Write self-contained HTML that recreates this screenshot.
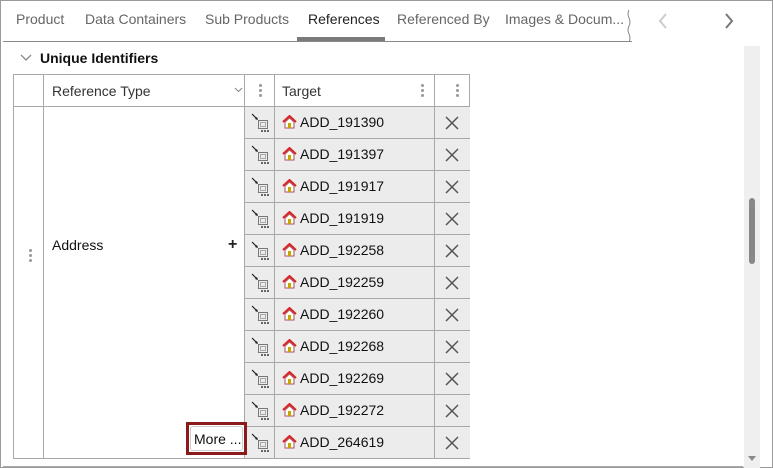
<!DOCTYPE html>
<html><head><meta charset="utf-8"><style>
*{margin:0;padding:0;box-sizing:border-box}
body{width:773px;height:468px;overflow:hidden;background:#fff;font-family:"Liberation Sans",Tahoma,sans-serif;font-size:14px;color:#222;position:relative}
.a{position:absolute}
.tab{position:absolute;top:11px;font-size:14px;color:#666}
.cell{position:absolute;border-left:1px solid #a8a8a8;border-top:1px solid #a8a8a8}
.g{background:#ececec}
.t{position:absolute;left:25px;top:7px;font-size:14px;color:#111}
.house{position:absolute;left:7px;top:8px}
.x{position:absolute;left:10px;top:9px}
.ic{position:absolute;left:6px;top:6px}
.dots{position:absolute;width:3px}
.dots i{display:block;width:3px;height:3px;border-radius:50%;background:#999;margin-bottom:2px}
</style></head><body>
<div class="a" style="left:0;top:0;width:773px;height:468px;border:1px solid #9a9a9a"></div>
<div class="tab" style="left:16px">Product</div>
<div class="tab" style="left:85px">Data Containers</div>
<div class="tab" style="left:205px">Sub Products</div>
<div class="tab" style="left:308px;color:#222">References</div>
<div class="tab" style="left:397px">Referenced By</div>
<div class="tab" style="left:505px">Images &amp; Docum...</div>
<svg class="a" style="left:626px;top:10px" width="6" height="32"><path d="M3 0 Q1 4 3 8 Q5 12 3 16 Q1 20 3 24 Q5 28 3 32" fill="none" stroke="#888" stroke-width="1"/></svg>
<div class="a" style="left:3px;top:41px;width:629px;height:1px;background:#8a8a8a"></div>
<div class="a" style="left:297px;top:37px;width:88px;height:4px;background:#7a7a7a"></div>
<svg class="a" style="left:656px;top:12px" width="14" height="18"><path d="M10 2 L4 9 L10 16" fill="none" stroke="#ccc" stroke-width="2"/></svg>
<svg class="a" style="left:722px;top:12px" width="14" height="18"><path d="M4 2 L10 9 L4 16" fill="none" stroke="#777" stroke-width="2"/></svg>
<div class="a" style="left:744px;top:46px;width:16px;height:422px;background:#efefef"></div>
<div class="a" style="left:749px;top:198px;width:6px;height:66px;background:#888;border-radius:3px"></div>
<svg class="a" style="left:746px;top:455px" width="12" height="8"><path d="M2 1 L10 1 L6 6Z" fill="#888"/></svg>
<svg class="a" style="left:20px;top:54px" width="12" height="8"><path d="M1 1 L6 6 L11 1" fill="none" stroke="#888" stroke-width="1.3"/></svg>
<div class="a" style="left:40px;top:50px;font-weight:bold;font-size:14px;color:#111">Unique Identifiers</div>
<div class="a" style="left:13px;top:74px;width:457px;height:385px;border-right:1px solid #a8a8a8;border-bottom:1px solid #a8a8a8"></div>
<div class="cell" style="left:13px;top:74px;width:30px;height:32px"></div>
<div class="cell" style="left:43px;top:74px;width:201px;height:32px"><span class="a" style="left:8px;top:8px;color:#333">Reference Type</span><svg class="a" style="left:190px;top:12px" width="9" height="6"><path d="M1 1 L4.5 4.5 L8 1" fill="none" stroke="#888"/></svg></div>
<div class="cell" style="left:244px;top:74px;width:30px;height:32px"><div class="dots" style="left:14px;top:9px"><i></i><i></i><i></i></div></div>
<div class="cell" style="left:274px;top:74px;width:160px;height:32px"><span class="a" style="left:7px;top:8px;color:#333">Target</span><div class="dots" style="left:146px;top:9px"><i></i><i></i><i></i></div></div>
<div class="cell" style="left:434px;top:74px;width:36px;height:32px"><div class="dots" style="left:21px;top:9px"><i></i><i></i><i></i></div></div>
<div class="cell" style="left:13px;top:106px;width:30px;height:353px"><div class="dots" style="left:15px;top:142px"><i></i><i></i><i></i></div></div>
<div class="cell" style="left:43px;top:106px;width:201px;height:353px"><span class="a" style="left:8px;top:130px;color:#111">Address</span><span class="a" style="left:184px;top:129px;font-weight:bold;font-size:16px">+</span></div>
<div id="rows"></div>
<script>
var ids=["191390","191397","191917","191919","192258","192259","192260","192268","192269","192272","264619"],h="";
ids.forEach(function(id,i){var y=106+i*32;
h+='<div class="cell g" style="left:244px;top:'+y+'px;width:30px;height:32px"><svg class="ic" width="20" height="20"><path d="M1 1 L6 6" stroke="#111" stroke-width="1"/><path d="M4 6 L7 7 L6 4Z" fill="#111"/><rect x="7.5" y="7.5" width="9" height="8" fill="none" stroke="#777"/><rect x="9.5" y="9.5" width="5" height="4" fill="none" stroke="#aaa"/><rect x="10" y="17" width="2" height="2" fill="#666"/><rect x="13" y="17" width="2" height="2" fill="#666"/><rect x="16" y="17" width="2" height="2" fill="#666"/></svg></div>';
h+='<div class="cell g" style="left:274px;top:'+y+'px;width:160px;height:32px"><svg class="house" width="15" height="14"><path d="M1 7 L7.5 1 L14 7" fill="none" stroke="#d22" stroke-width="2"/><path d="M3 7 L3 13 L12 13 L12 7 L7.5 3Z" fill="#fff" stroke="#a55" stroke-width="1"/><rect x="6" y="8" width="3" height="5" fill="#c9a400"/></svg><span class="t">ADD_'+id+'</span></div>';
h+='<div class="cell g" style="left:434px;top:'+y+'px;width:36px;height:32px"><svg class="x" width="14" height="14"><path d="M1 1 L13 13 M13 1 L1 13" stroke="#555" stroke-width="1.5"/></svg></div>';});
document.getElementById('rows').innerHTML=h;
</script>
<div class="a" style="left:186px;top:422px;width:61px;height:33px;border:3px solid #8b1a1a"></div>
<div class="a" style="left:190px;top:426px;width:53px;height:25px;border:1px solid #ccc;border-radius:3px;background:#fff;padding:4px 0 0 3px;color:#111">More ...</div>
<div class="a" style="left:3px;top:466px;width:740px;height:1px;background:#aaa"></div>
</body></html>
